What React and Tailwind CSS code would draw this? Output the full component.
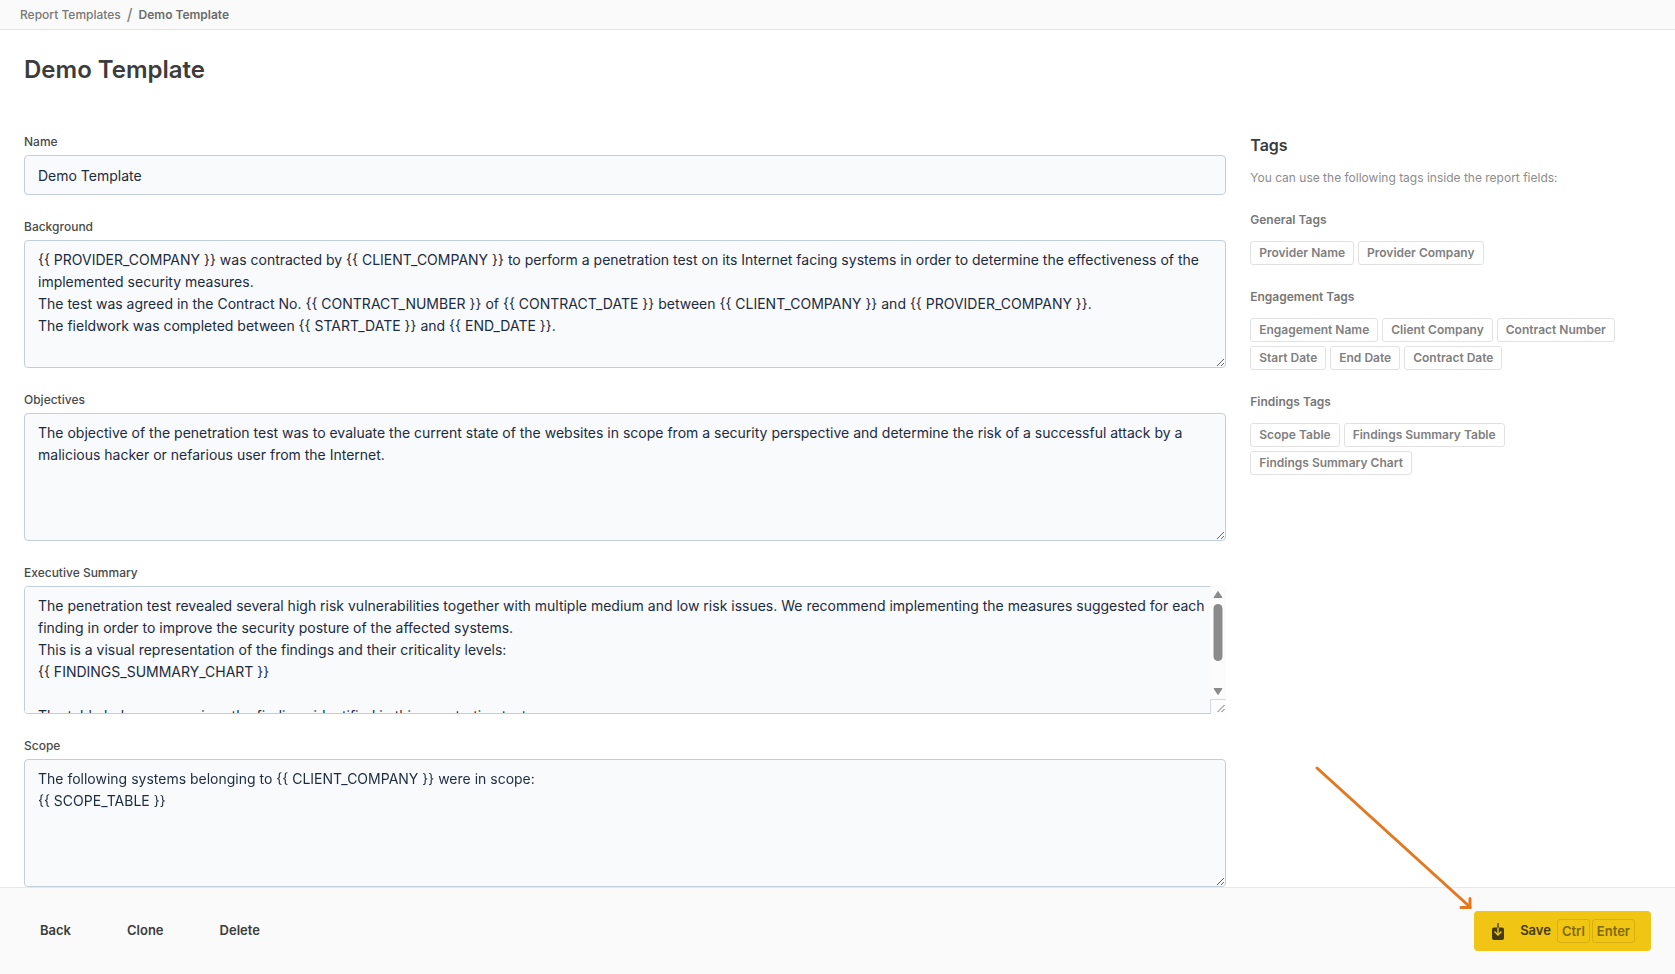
import { useState } from 'react'

const initialFields = {
  background:
    '{{ PROVIDER_COMPANY }} was contracted by {{ CLIENT_COMPANY }} to perform a penetration test on its Internet facing systems in order to determine the effectiveness of the implemented security measures.\nThe test was agreed in the Contract No. {{ CONTRACT_NUMBER }} of {{ CONTRACT_DATE }} between {{ CLIENT_COMPANY }} and {{ PROVIDER_COMPANY }}.\nThe fieldwork was completed between {{ START_DATE }} and {{ END_DATE }}.',
  objectives:
    'The objective of the penetration test was to evaluate the current state of the websites in scope from a security perspective and determine the risk of a successful attack by a malicious hacker or nefarious user from the Internet.',
  summary:
    'The penetration test revealed several high risk vulnerabilities together with multiple medium and low risk issues. We recommend implementing the measures suggested for each finding in order to improve the security posture of the affected systems.\nThis is a visual representation of the findings and their criticality levels:\n{{ FINDINGS_SUMMARY_CHART }}\n\nThe table below summarizes the findings identified in this penetration test:\n{{ FINDINGS_SUMMARY_TABLE }}\n\n',
  scope: 'The following systems belonging to {{ CLIENT_COMPANY }} were in scope:\n{{ SCOPE_TABLE }}',
}

const textAreas = [
  { id: 'background', label: 'Background' },
  { id: 'objectives', label: 'Objectives' },
  { id: 'summary', label: 'Executive Summary', scrolls: true },
  { id: 'scope', label: 'Scope' },
]

const tagGroups = [
  { title: 'General Tags', tags: ['Provider Name', 'Provider Company'] },
  {
    title: 'Engagement Tags',
    tags: ['Engagement Name', 'Client Company', 'Contract Number', 'Start Date', 'End Date', 'Contract Date'],
  },
  { title: 'Findings Tags', tags: ['Scope Table', 'Findings Summary Table', 'Findings Summary Chart'] },
]

const fieldClass =
  'block w-full rounded-[4px] border border-[#c3cedb] bg-[#f8fafc] px-[13px] text-sm leading-[22px] text-[#1c2b3f] outline-none focus:border-[#8fa3ba]'

function Field({ id, label, children }) {
  return (
    <div>
      <label htmlFor={id} className="mb-1 block text-xs leading-[18px] font-medium text-[#4a4a4a]">
        {label}
      </label>
      {children}
    </div>
  )
}

// Always-visible scrollbar, laid over the textarea's right edge.
function ScrollTrack() {
  return (
    <svg
      width="16"
      height="128"
      viewBox="0 0 16 128"
      fill="none"
      aria-hidden="true"
      className="pointer-events-none absolute top-0 right-0"
    >
      <rect width="16" height="128" fill="#fcfcfc" />
      <path d="M8 5.500L12 11.500H4Z" fill="#8b8b8b" stroke="#8b8b8b" strokeLinejoin="round" />
      <rect x="3.500" y="18" width="9" height="57" rx="4.500" fill="#8b8b8b" />
      <path d="M8 108.500L12 102.500H4Z" fill="#8b8b8b" stroke="#8b8b8b" strokeLinejoin="round" />
      <path d="M16 113.500H0.500V128" stroke="#d3d9e0" />
      <path d="M7.500 126L14.500 119M11.500 126L14.500 123" stroke="#6f6f6f" />
    </svg>
  )
}

function TagGroup({ title, tags }) {
  return (
    <section>
      <h3 className="text-xs leading-[18px] font-semibold text-[#777777]">{title}</h3>
      <div className="mt-3 flex flex-wrap gap-1">
        {tags.map((tag) => (
          <button
            key={tag}
            type="button"
            className="rounded-[3px] border border-[#e2e2e2] bg-white px-2 text-xs leading-[22px] font-semibold text-[#808080] hover:border-[#c8c8c8]"
          >
            {tag}
          </button>
        ))}
      </div>
    </section>
  )
}

function SaveIcon() {
  return (
    <svg width="16" height="20" viewBox="0 0 16 20" fill="none" aria-hidden="true">
      <rect x="2" y="6.500" width="12" height="12.500" rx="2" fill="#453a0c" />
      <path d="M8 2V7" stroke="#453a0c" strokeWidth="1.400" />
      <path d="M8 6.500V13.500M4.500 10.500L8 14L11.500 10.500" stroke="#f0c514" strokeWidth="1.400" />
    </svg>
  )
}

function Pointer() {
  return (
    <svg
      width="160"
      height="146"
      viewBox="0 0 160 146"
      fill="none"
      stroke="#e5771e"
      strokeWidth="3"
      strokeLinecap="round"
      aria-hidden="true"
      className="pointer-events-none absolute right-full bottom-full"
    >
      <path d="M3 3L156 142" />
      <path d="M156 133.500V142.500H147" />
    </svg>
  )
}

function FooterButton({ children }) {
  return (
    <button type="button" className="h-10 rounded px-4 text-[13px] font-semibold text-[#3c3c3c] hover:bg-black/5">
      {children}
    </button>
  )
}

function Key({ children }) {
  return (
    <kbd className="rounded-[3px] border border-[#d9b010] px-1 font-[Inter,sans-serif] text-[13px] leading-[22px] font-semibold text-[#806909]">
      {children}
    </kbd>
  )
}

export default function App() {
  const [name, setName] = useState('Demo Template')
  const [fields, setFields] = useState(initialFields)

  const updateField = (id, value) => setFields((current) => ({ ...current, [id]: value }))

  return (
    <div className="flex h-screen flex-col bg-white font-[Inter,sans-serif] text-[#3c3c3c]">
      <nav aria-label="Breadcrumb" className="border-b border-[#e4e4e4] bg-[#fafafa] px-5">
        <ol className="flex items-center text-xs leading-[29px] font-medium text-[#777777]">
          <li>
            <a href="#templates">Report Templates</a>
          </li>
          <li aria-hidden="true" className="px-1.5 text-base leading-[29px] font-normal">
            /
          </li>
          <li>
            <a href="#demo" aria-current="page" className="font-semibold text-[#6b6b6b]">
              Demo Template
            </a>
          </li>
        </ol>
      </nav>

      <main className="min-h-0 flex-1 overflow-hidden px-6 pt-6">
        <h1 className="text-2xl leading-8 font-semibold">Demo Template</h1>

        <div className="mt-[47px] grid grid-cols-[3fr_1fr] gap-6">
          <form id="template-form" className="flex flex-col gap-[23px]" onSubmit={(event) => event.preventDefault()}>
            <Field id="name" label="Name">
              <input
                id="name"
                type="text"
                value={name}
                onChange={(event) => setName(event.target.value)}
                className={`${fieldClass} h-10`}
              />
            </Field>
            {textAreas.map(({ id, label, scrolls }) => (
              <Field key={id} id={id} label={label}>
                <div className="relative">
                  <textarea
                    id={id}
                    value={fields[id]}
                    onChange={(event) => updateField(id, event.target.value)}
                    className={`${fieldClass} h-32 resize py-2`}
                  />
                  {scrolls ? <ScrollTrack /> : null}
                </div>
              </Field>
            ))}
          </form>

          <aside>
            <h2 className="text-base leading-6 font-semibold">Tags</h2>
            <p className="mt-3 text-xs leading-[18px] text-[#8c8c8c]">
              You can use the following tags inside the report fields:
            </p>
            <div className="mt-6 flex flex-col gap-[23px]">
              {tagGroups.map((group) => (
                <TagGroup key={group.title} title={group.title} tags={group.tags} />
              ))}
            </div>
          </aside>
        </div>
      </main>

      <footer className="flex items-center justify-between border-t border-[#e8e8e8] bg-[#fafafa] px-6 py-[23px]">
        <div className="flex gap-6">
          <FooterButton>Back</FooterButton>
          <FooterButton>Clone</FooterButton>
          <FooterButton>Delete</FooterButton>
        </div>

        <div className="relative">
          <Pointer />
          <button
            type="submit"
            form="template-form"
            className="flex h-10 items-center rounded-[4px] bg-[#f0c514] px-4 text-[13px] font-semibold text-[#453a0c] hover:bg-[#e6bb0c]"
          >
            <SaveIcon />
            <span className="mr-1.5 ml-3.5">Save</span>
            <span className="flex gap-0.5">
              <Key>Ctrl</Key>
              <Key>Enter</Key>
            </span>
          </button>
        </div>
      </footer>
    </div>
  )
}
